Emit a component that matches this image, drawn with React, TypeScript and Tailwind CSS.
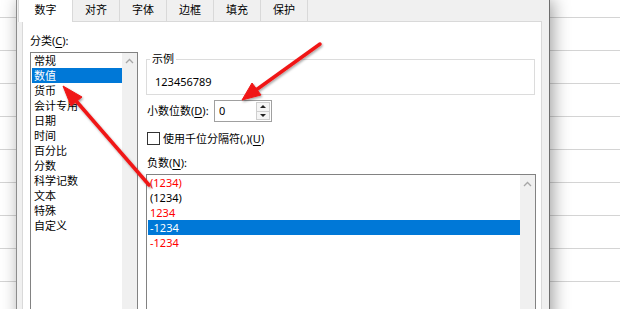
import React from "react";

const FONT = { fontFamily: '"Noto Sans", "Noto Sans CJK SC", sans-serif' };

function SheetStrip({ className }: { className: string }) {
  return (
    <div className={`h-full bg-white flex flex-col ${className}`}>
      <div className="h-[18px] shrink-0 border-b border-[#d4d4d4]" />
      {Array.from({ length: 9 }).map((_, i) => (
        <div key={i} className="h-[33px] shrink-0 border-b border-[#d4d4d4]" />
      ))}
    </div>
  );
}

function Chevron() {
  return (
    <svg width="9" height="6" viewBox="0 0 9 6">
      <polyline points="1,5 4.5,1.5 8,5" fill="none" stroke="#a6a6a6" strokeWidth="1.3" />
    </svg>
  );
}

const categories = ["常规", "数值", "货币", "会计专用", "日期", "时间", "百分比", "分数", "科学记数", "文本", "特殊", "自定义"];

const negatives: { t: string; red: boolean; sel?: boolean }[] = [
  { t: "(1234)", red: true },
  { t: "(1234)", red: false },
  { t: "1234", red: true },
  { t: "-1234", red: false, sel: true },
  { t: "-1234", red: true },
];

export default function App() {
  return (
    <div className="relative w-[620px] h-[309px] overflow-hidden flex bg-white text-[11px] text-black" style={FONT}>
      <SheetStrip className="w-[16px] shrink-0" />

      <div className="relative z-10 w-[534px] shrink-0 self-start h-[340px] bg-[#f0f0f0] border-x border-l-[#8c8c8c] border-r-[#6e6e6e] shadow-[3px_0_16px_rgba(0,0,0,0.38)] flex flex-col">
        {/* tabs */}
        <div className="flex h-[22px] -mb-px">
          <div className="relative z-10 ml-[1px] w-[55px] h-[22px] bg-white border-x border-[#d9d9d9] flex items-center justify-center pb-[2px]">
            数字
          </div>
          {["对齐", "字体", "边框", "填充", "保护"].map((t) => (
            <div key={t} className="w-[47px] h-[21px] border-r border-[#d9d9d9] flex items-center justify-center pb-[1px]">
              {t}
            </div>
          ))}
        </div>

        {/* panel */}
        <div className="ml-[5px] w-[520px] h-[330px] bg-white border border-[#d9d9d9] flex pl-[7px]">
          {/* left column */}
          <div className="w-[108px] shrink-0 pt-[12px] flex flex-col">
            <div className="h-[14px] leading-[14px]">
              分类(<u className="underline-offset-2">C</u>):
            </div>
            <div className="mt-[4px] h-[300px] border border-[#828282] flex">
              <div className="flex-1 flex flex-col">
                {categories.map((c) => (
                  <div
                    key={c}
                    className={
                      c === "数值"
                        ? "ml-[1px] h-[15px] leading-[15px] pl-[2px] bg-[#0078d7] text-white"
                        : "ml-[1px] h-[15px] leading-[15px] pl-[2px]"
                    }
                  >
                    {c}
                  </div>
                ))}
              </div>
              <div className="w-[15px] bg-[#f0f0f0] flex justify-center pt-[5px]">
                <Chevron />
              </div>
            </div>
          </div>

          {/* right column */}
          <div className="ml-[8px] w-[390px] shrink-0 flex flex-col">
            <fieldset className="mt-[30px] w-[389px] border border-[#dcdcdc]">
              <legend className="ml-[3px] px-[2px] leading-[14px]">示例</legend>
              <div className="pl-[8px] pt-[9px] pb-[5px] leading-[14px]">123456789</div>
            </fieldset>

            <div className="mt-[5px] h-[22px] flex items-center">
              <div className="w-[68px] pl-[1px] leading-[14px]">
                小数位数(<u className="underline-offset-2">D</u>):
              </div>
              <div className="w-[58px] h-[22px] border border-[#a0a0a0] flex">
                <div className="flex-1 pl-[4px] leading-[20px]">0</div>
                <div className="w-[15px] flex flex-col py-[1px] pr-[1px]">
                  <div className="flex-1 border border-[#cfcfcf] bg-[#f5f5f5] flex items-center justify-center">
                    <svg width="6" height="3" viewBox="0 0 6 3">
                      <polygon points="0,3 3,0 6,3" fill="#222" />
                    </svg>
                  </div>
                  <div className="flex-1 border border-t-0 border-[#cfcfcf] bg-[#f5f5f5] flex items-center justify-center">
                    <svg width="6" height="3" viewBox="0 0 6 3">
                      <polygon points="0,0 3,3 6,0" fill="#222" />
                    </svg>
                  </div>
                </div>
              </div>
            </div>

            <div className="mt-[10px] h-[13px] flex items-center">
              <div className="ml-[1px] w-[13px] h-[13px] border border-[#333] bg-white" />
              <div className="ml-[3px] leading-[14px]">
                使用千位分隔符(,)(<u className="underline-offset-2">U</u>)
              </div>
            </div>

            <div className="mt-[11px] pl-[1px] h-[14px] leading-[14px]">
              负数(<u className="underline-offset-2">N</u>):
            </div>

            <div className="mt-[4px] w-[390px] h-[200px] border border-[#828282] flex">
              <div className="flex-1 flex flex-col">
                {negatives.map((n, i) => (
                  <div
                    key={i}
                    className={
                      n.sel
                        ? "ml-[1px] h-[15px] leading-[15px] pl-[2px] bg-[#0078d7] text-white"
                        : n.red
                        ? "ml-[1px] h-[15px] leading-[15px] pl-[2px] text-[#ff0000]"
                        : "ml-[1px] h-[15px] leading-[15px] pl-[2px]"
                    }
                  >
                    {n.t}
                  </div>
                ))}
              </div>
              <div className="w-[15px] bg-[#f0f0f0] flex justify-center pt-[6px]">
                <Chevron />
              </div>
            </div>
          </div>
        </div>
      </div>

      <SheetStrip className="flex-1" />

      {/* annotation arrows */}
      <svg className="absolute left-0 top-0 z-20 pointer-events-none" width="620" height="309" viewBox="0 0 620 309">
        <defs>
          <filter id="sh" x="-20%" y="-20%" width="140%" height="140%">
            <feDropShadow dx="1" dy="1.5" stdDeviation="1" floodColor="#000" floodOpacity="0.35" />
          </filter>
        </defs>
        <g filter="url(#sh)" fill="#f01818" stroke="#f01818">
          <line x1="320" y1="44" x2="256" y2="90" strokeWidth="3.5" strokeLinecap="round" />
          <polygon points="242,100 261,95 252,83" strokeWidth="1" strokeLinejoin="round" />
          <line x1="149" y1="185" x2="77" y2="102" strokeWidth="3.5" strokeLinecap="round" />
          <polygon points="63,86 82,97 71,106" strokeWidth="1" strokeLinejoin="round" />
        </g>
      </svg>
    </div>
  );
}
